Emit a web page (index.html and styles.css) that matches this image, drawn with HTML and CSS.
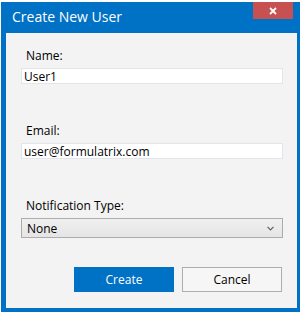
FILE: index.html
```html
<!DOCTYPE html>
<html lang="en">
  <head>
    <meta charset="UTF-8" />
    <title>Create New User</title>
    <link rel="stylesheet" href="styles.css">
  </head>
  <body>
    <div class="window">
      <div class="titlebar">
        <span class="title">Create New User</span>
        <button class="close" aria-label="Close">
          <svg width="8" height="8" viewBox="0 0 8 8">
            <path d="M1 1 L7 7 M7 1 L1 7" stroke="#fff" stroke-width="1.8" />
          </svg>
        </button>
      </div>
      <div class="content">
        <div class="field">
          <label for="name">Name:</label>
          <input class="textbox" id="name" type="text" value="User1" />
        </div>
        <div class="field">
          <label for="email">Email:</label>
          <input class="textbox" id="email" type="text" value="user@formulatrix.com" />
        </div>
        <div class="field">
          <label>Notification Type:</label>
          <div class="combo">
            <span>None</span>
            <svg width="7" height="5" viewBox="0 0 7 5">
              <path d="M0.5 0.8 L3.5 3.8 L6.5 0.8" fill="none" stroke="#606060" stroke-width="1.2" />
            </svg>
          </div>
        </div>
        <div class="actions">
          <button class="btn primary">Create</button>
          <button class="btn">Cancel</button>
        </div>
      </div>
    </div>
  </body>
</html>
```

FILE: styles.css
```css
body {
  margin: 0;
  background-color: #fff;
  font-family: "Open Sans", "Noto Sans", sans-serif;
  font-size: 12px;
  color: #000;
}
.window {
  margin: 2px 0 0 1px;
  width: 299px;
  height: 310px;
  background-color: #0072c6;
  display: flex;
  flex-direction: column;
}
.titlebar {
  height: 31px;
  display: flex;
  justify-content: space-between;
  align-items: flex-start;
}
.title {
  color: #fff;
  font-size: 14px;
  line-height: 20px;
  padding: 5px 0 0 11px;
}
.close {
  width: 40px;
  height: 17px;
  margin-right: 7px;
  border: none;
  padding: 0;
  background-color: #c75050;
  display: flex;
  align-items: center;
  justify-content: center;
}
.content {
  flex: 1;
  margin: 0 3px 4px 5px;
  padding: 15px 14px 0 15px;
  background-color: #f3f3f3;
}
.field + .field {
  margin-top: 39px;
}
label {
  display: block;
  line-height: 16px;
  margin: 0 0 4px 5px;
}
.textbox {
  display: block;
  box-sizing: border-box;
  width: 100%;
  height: 16px;
  margin: 0;
  padding: 0 2px;
  border: 1px solid #e1e6ec;
  background-color: #fff;
  font-family: inherit;
  font-size: 12px;
  color: #000;
  outline: none;
}
.combo {
  box-sizing: border-box;
  height: 20px;
  margin-top: 1px;
  padding: 0 8px 0 5px;
  border: 1px solid #acacac;
  background: linear-gradient(#f0f0f0, #e5e5e5);
  display: flex;
  align-items: center;
  justify-content: space-between;
}
.actions {
  margin-top: 29px;
  margin-right: 1px;
  display: flex;
  justify-content: flex-end;
  gap: 8px;
}
.btn {
  width: 100px;
  height: 25px;
  padding: 0;
  border: 1px solid #adadad;
  background-color: #f6f6f6;
  font-family: inherit;
  font-size: 12px;
  color: #000;
}
.btn.primary {
  border-color: #0072c6;
  background-color: #0072c6;
  color: #fff;
}
```
